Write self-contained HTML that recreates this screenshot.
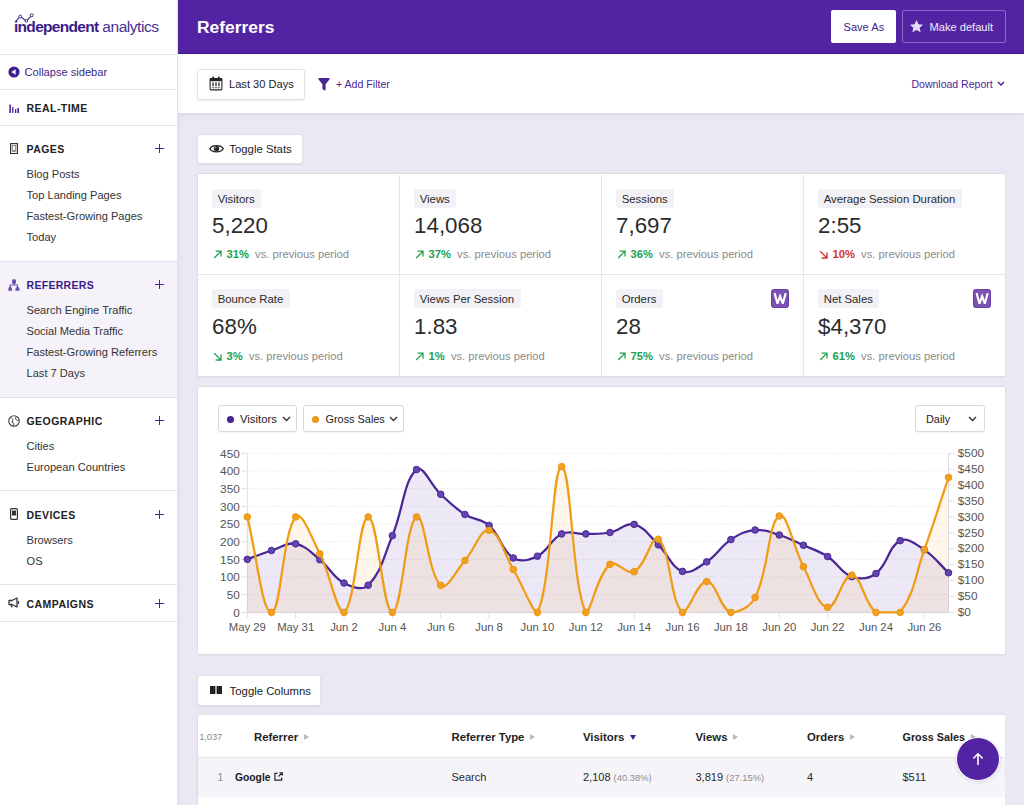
<!DOCTYPE html>
<html><head><meta charset="utf-8">
<style>
*{box-sizing:border-box;margin:0;padding:0}
html,body{width:1024px;height:805px;overflow:hidden;background:#ebe8f3;font-family:"Liberation Sans",sans-serif;color:#2c2c2c}
.abs{position:absolute}
#sidebar{position:absolute;left:0;top:0;width:178px;height:805px;background:#fff;border-right:1px solid #e3e1ea;box-shadow:1px 0 5px rgba(40,30,80,0.05);z-index:2}
.sec{position:absolute;left:0;width:177px;border-bottom:1px solid #e3e1ea}
.hdr{position:absolute;left:26.5px;font-size:10.5px;font-weight:bold;letter-spacing:0.45px;color:#222;line-height:12px}
.item{position:absolute;left:26.5px;font-size:11.1px;color:#333;line-height:13px;white-space:nowrap}
.plus{position:absolute;left:155px;width:9px;height:9px}
.plus:before,.plus:after{content:"";position:absolute;background:#4b2596}
.plus:before{left:0;top:3.9px;width:9px;height:1.2px}
.plus:after{left:3.9px;top:0;width:1.2px;height:9px}
#header{position:absolute;left:178px;top:0;width:846px;height:54px;background:#5224a4;border-bottom:1px solid #3e1a8e}
#filterbar{position:absolute;left:178px;top:54px;width:846px;height:59.5px;background:#fff;border-bottom:1px solid #e0dde6;box-shadow:0 1px 3px rgba(40,30,60,0.06)}
.btn{position:absolute;background:#fff;border:1px solid #e2e0e8;border-radius:3px;box-shadow:0 1px 2px rgba(0,0,0,0.08)}
.btxt{position:absolute;font-size:11.1px;color:#222;white-space:nowrap;line-height:13px}
.card{position:absolute;background:#fff;border:1px solid #dedce5;border-radius:2px;box-shadow:0 1px 1px rgba(0,0,0,0.03)}
.label{position:absolute;background:#f2f1f6;border-radius:3px;height:19.5px;font-size:11.35px;color:#2a2a2a;line-height:20px;padding:0 6.5px 0 6px;white-space:nowrap}
.big{position:absolute;font-size:22.3px;color:#2c2c2c;line-height:24px;white-space:nowrap}
.trend{position:absolute;font-size:11.2px;line-height:13px;white-space:nowrap;color:#8a8a8a}
.trend b{font-weight:bold}
.up b{color:#22a04b}
.down b{color:#d6312b}
.downgood b{color:#22a04b}
.arr{display:inline-block;width:9px;height:9px;vertical-align:-1px;margin-right:5px}
.woo{position:absolute;width:18.3px;height:18.3px;background:#7b52b2;border:1px solid #6a40a6;border-radius:2.5px;overflow:hidden}
.ax{font-size:11.3px;fill:#555;font-family:"Liberation Sans",sans-serif}
.th{position:absolute;font-size:11.35px;font-weight:bold;color:#222;line-height:13px;white-space:nowrap}
.td{position:absolute;font-size:11px;color:#2a2a2a;line-height:13px;white-space:nowrap}
.sortarr{display:inline-block;width:0;height:0;border-top:3.5px solid transparent;border-bottom:3.5px solid transparent;border-left:5px solid #b9b9c0;margin-left:6px;vertical-align:1px}
.pct{font-size:9.4px;color:#8d8d8d}
</style></head><body>
<div id="sidebar">
  <!-- logo -->
  <svg class="abs" style="left:0;top:0" width="40" height="28" viewBox="0 0 40 28">
    <polyline points="15.4,21.6 20.3,16.5 26.4,20.9 31.7,15.3" fill="none" stroke="#3f2a7e" stroke-width="1.1"/>
    <circle cx="20.3" cy="16.5" r="1.4" fill="#fff" stroke="#3f2a7e" stroke-width="1"/>
    <circle cx="26.4" cy="20.9" r="1.3" fill="#fff" stroke="#3f2a7e" stroke-width="1"/>
    <circle cx="31.7" cy="15.3" r="1.5" fill="#fff" stroke="#3f2a7e" stroke-width="1"/>
  </svg>
  <div class="abs" style="left:14px;top:18px;font-size:15.5px;line-height:18px;white-space:nowrap;letter-spacing:-0.7px"><span style="font-weight:bold;color:#3a1a88">independent</span><span style="color:#48308f;letter-spacing:-0.45px"> analytics</span></div>
  <div class="sec" style="top:0;height:55px"></div>
  <!-- collapse -->
  <div class="sec" style="top:55px;height:35px"></div>
  <svg class="abs" style="left:8px;top:66px" width="12" height="12" viewBox="0 0 12 12"><circle cx="6" cy="6" r="5.6" fill="#3f1f8e"/><path d="M3.3,6 L7.6,3.3 L7.6,8.7 Z" fill="#fff"/></svg>
  <div class="item" style="left:24.5px;top:65.5px;color:#3b1f85">Collapse sidebar</div>
  <!-- real-time -->
  <div class="sec" style="top:90px;height:36px"></div>
  <svg class="abs" style="left:9px;top:103.5px" width="10" height="9" viewBox="0 0 10 9"><rect x="0.3" y="0.5" width="1.6" height="8.5" fill="#4b2596"/><rect x="3.1" y="3" width="1.3" height="6" fill="#4b2596"/><rect x="6" y="5" width="1.3" height="4" fill="#4b2596"/><rect x="8.4" y="4" width="1.6" height="5" fill="#4b2596"/></svg>
  <div class="hdr" style="top:102px">REAL-TIME</div>
  <!-- pages -->
  <div class="sec" style="top:126px;height:136px"></div>
  <svg class="abs" style="left:10px;top:143.3px" width="8" height="11.2" viewBox="0 0 8 11.2"><rect x="0.6" y="0.6" width="6.8" height="10" fill="none" stroke="#333" stroke-width="1.2"/><rect x="2.3" y="2.6" width="3.4" height="4.8" fill="none" stroke="#777" stroke-width="0.9"/><rect x="2.3" y="8.2" width="3.4" height="0.9" fill="#777"/></svg>
  <div class="hdr" style="top:143px">PAGES</div>
  <div class="plus" style="top:144px"></div>
  <div class="item" style="top:167.7px">Blog Posts</div>
  <div class="item" style="top:188.9px">Top Landing Pages</div>
  <div class="item" style="top:210.1px">Fastest-Growing Pages</div>
  <div class="item" style="top:231.3px">Today</div>
  <!-- referrers -->
  <div class="sec" style="top:262px;height:136px;background:#f5f3f9"></div>
  <svg class="abs" style="left:8px;top:278px" width="12" height="13" viewBox="0 0 12 13"><rect x="4.1" y="1.2" width="3.9" height="4.8" rx="1.4" fill="#6a50b2"/><path d="M6,5.5 V7 M2.2,9.5 V7 H9.5 V9.5" fill="none" stroke="#6a50b2" stroke-width="1.1"/><path d="M0.2,12.7 Q0.2,9 2.15,8.8 Q4.1,9 4.1,12.7 Z" fill="#6a50b2"/><path d="M7.4,12.7 Q7.4,9 9.45,8.8 Q11.5,9 11.5,12.7 Z" fill="#6a50b2"/></svg>
  <div class="hdr" style="top:278.7px;color:#3a1d88;letter-spacing:0.3px">REFERRERS</div>
  <div class="plus" style="top:280px"></div>
  <div class="item" style="top:304px">Search Engine Traffic</div>
  <div class="item" style="top:325px">Social Media Traffic</div>
  <div class="item" style="top:346px">Fastest-Growing Referrers</div>
  <div class="item" style="top:367px">Last 7 Days</div>
  <!-- geographic -->
  <div class="sec" style="top:398px;height:93px"></div>
  <svg class="abs" style="left:8px;top:415px" width="12" height="12" viewBox="0 0 12 12"><circle cx="6" cy="6" r="5.3" fill="none" stroke="#444" stroke-width="1.1"/><path d="M3,2.5 L5,4.5 L4,7 L6,8.5 L5.5,11 M8,1.5 L7.5,4 L9.5,5.5 L11,5" fill="none" stroke="#444" stroke-width="1"/></svg>
  <div class="hdr" style="top:415px">GEOGRAPHIC</div>
  <div class="plus" style="top:416px"></div>
  <div class="item" style="top:440px">Cities</div>
  <div class="item" style="top:461px">European Countries</div>
  <!-- devices -->
  <div class="sec" style="top:491px;height:94px"></div>
  <svg class="abs" style="left:10px;top:508px" width="8" height="12" viewBox="0 0 8 12"><rect x="0.6" y="0.6" width="6.8" height="10.8" rx="1" fill="none" stroke="#333" stroke-width="1.2"/><rect x="2" y="2.5" width="4" height="5" fill="#333"/></svg>
  <div class="hdr" style="top:509px">DEVICES</div>
  <div class="plus" style="top:510px"></div>
  <div class="item" style="top:534px">Browsers</div>
  <div class="item" style="top:555px">OS</div>
  <!-- campaigns -->
  <div class="sec" style="top:585px;height:37px"></div>
  <svg class="abs" style="left:8px;top:597px" width="12" height="11" viewBox="0 0 12 11"><path d="M1,3.5 H4 L9,1 V10 L4,7.5 H1 Z M3,7.5 L4,10.5" fill="none" stroke="#333" stroke-width="1.3" stroke-linejoin="round"/><path d="M10.5,4 V7" stroke="#333" stroke-width="1.2"/></svg>
  <div class="hdr" style="top:598px">CAMPAIGNS</div>
  <div class="plus" style="top:599px"></div>
</div>

<div id="header">
  <div class="abs" style="left:19px;top:17.2px;font-size:17.4px;font-weight:bold;color:#fff;line-height:20px">Referrers</div>
  <div class="abs" style="left:653px;top:10px;width:65px;height:33px;background:#fff;border-radius:2px"></div>
  <div class="btxt" style="left:665.5px;top:20.6px;color:#3f2285">Save As</div>
  <div class="abs" style="left:724px;top:10px;width:104px;height:33px;border:1px solid #8a6cc6;border-radius:2px"></div>
  <svg class="abs" style="left:730.5px;top:18.6px" width="15" height="15" viewBox="0 0 24 24"><path d="M12,1.5 L15.2,8.2 L22.5,9 L17,14 L18.6,21.3 L12,17.6 L5.4,21.3 L7,14 L1.5,9 L8.8,8.2 Z" fill="#e4ddf2"/></svg>
  <div class="btxt" style="left:751.5px;top:20.6px;color:#f1edf8">Make default</div>
</div>

<div id="filterbar">
  <div class="btn" style="left:19px;top:14.5px;width:108px;height:31px"></div>
  <svg class="abs" style="left:31.2px;top:22px" width="14" height="15" viewBox="0 0 14 15"><rect x="1.1" y="2.6" width="11.8" height="11.3" rx="0.8" fill="none" stroke="#262626" stroke-width="1.1"/><rect x="1.1" y="2.6" width="11.8" height="2.6" fill="#262626"/><rect x="3.3" y="0.6" width="1.8" height="3.2" rx="0.6" fill="#262626"/><rect x="8.9" y="0.6" width="1.8" height="3.2" rx="0.6" fill="#262626"/><g fill="#262626"><rect x="3.4" y="6.4" width="1.3" height="3.6"/><rect x="6.35" y="6.4" width="1.3" height="3.6"/><rect x="9.3" y="6.4" width="1.3" height="3.6"/><rect x="3.4" y="11" width="1.3" height="1.3"/><rect x="6.35" y="11" width="1.3" height="1.3"/><rect x="9.3" y="11" width="1.3" height="1.3"/></g></svg>
  <div class="btxt" style="left:51px;top:23.5px">Last 30 Days</div>
  <svg class="abs" style="left:139.5px;top:23.5px" width="12" height="13" viewBox="0 0 12 13"><path d="M0.3,0.6 Q0.3,0 1,0 H11 Q11.7,0 11.7,0.6 Q11.7,1.2 11,2 L7.6,6.2 V11.6 Q7.6,12.8 6.6,12.3 L5,11.4 Q4.4,11 4.4,10.3 V6.2 L1,2 Q0.3,1.2 0.3,0.6 Z" fill="#4b2596"/></svg>
  <div class="btxt" style="left:158px;top:24px;color:#4b2596;font-size:10.6px">+ Add Filter</div>
  <div class="btxt" style="left:733.5px;top:24px;color:#4b2596;font-size:10.5px">Download Report</div>
  <svg class="abs" style="left:819px;top:27px" width="8" height="6" viewBox="0 0 8 6"><path d="M1,1 L4,4 L7,1" fill="none" stroke="#4b2596" stroke-width="1.5"/></svg>
</div>

<!-- toggle stats -->
<div class="btn" style="left:197px;top:133.5px;width:106px;height:30px"></div>
<svg class="abs" style="left:208.8px;top:144.3px" width="15" height="9.5" viewBox="0 0 15 9.5"><path d="M0.8,4.75 C3,0.6 12,0.6 14.2,4.75 C12,8.9 3,8.9 0.8,4.75 Z" fill="none" stroke="#222" stroke-width="1.4"/><circle cx="7.5" cy="4.6" r="2.7" fill="#222"/><circle cx="6.6" cy="3.6" r="0.9" fill="#999"/></svg>
<div class="btxt" style="left:229.3px;top:142.6px;font-size:11.35px">Toggle Stats</div>

<!-- stats grid -->
<div class="card" style="left:197px;top:173.3px;width:809px;height:203.7px"></div>
<div class="abs" style="left:399px;top:175px;width:1px;height:201px;background:#e6e4ec"></div>
<div class="abs" style="left:601px;top:175px;width:1px;height:201px;background:#e6e4ec"></div>
<div class="abs" style="left:803px;top:175px;width:1px;height:201px;background:#e6e4ec"></div>
<div class="abs" style="left:198px;top:274px;width:807px;height:1px;background:#e6e4ec"></div>
<div class="label" style="left:211.7px;top:188.5px">Visitors</div>
<div class="big" style="left:212.1px;top:213.6px">5,220</div>
<div class="trend up" style="left:212.5px;top:247.9px"><svg class="arr" viewBox="0 0 9 9"><path d="M1.2,8 L7.8,1.4 M2.6,1.2 H8 V6.6" fill="none" stroke="#22a04b" stroke-width="1.3"/></svg><b>31%</b>&nbsp; vs. previous period</div>
<div class="label" style="left:413.7px;top:188.5px">Views</div>
<div class="big" style="left:414.1px;top:213.6px">14,068</div>
<div class="trend up" style="left:414.5px;top:247.9px"><svg class="arr" viewBox="0 0 9 9"><path d="M1.2,8 L7.8,1.4 M2.6,1.2 H8 V6.6" fill="none" stroke="#22a04b" stroke-width="1.3"/></svg><b>37%</b>&nbsp; vs. previous period</div>
<div class="label" style="left:615.7px;top:188.5px">Sessions</div>
<div class="big" style="left:616.1px;top:213.6px">7,697</div>
<div class="trend up" style="left:616.5px;top:247.9px"><svg class="arr" viewBox="0 0 9 9"><path d="M1.2,8 L7.8,1.4 M2.6,1.2 H8 V6.6" fill="none" stroke="#22a04b" stroke-width="1.3"/></svg><b>36%</b>&nbsp; vs. previous period</div>
<div class="label" style="left:817.7px;top:188.5px">Average Session Duration</div>
<div class="big" style="left:818.1px;top:213.6px">2:55</div>
<div class="trend down" style="left:818.5px;top:247.9px"><svg class="arr" viewBox="0 0 9 9"><path d="M1.2,1.2 L7.8,7.8 M2.6,8 H8 V2.6" fill="none" stroke="#d6312b" stroke-width="1.3"/></svg><b>10%</b>&nbsp; vs. previous period</div>
<div class="label" style="left:211.7px;top:288.9px">Bounce Rate</div>
<div class="big" style="left:212.1px;top:315.2px">68%</div>
<div class="trend downgood" style="left:212.5px;top:349.5px"><svg class="arr" viewBox="0 0 9 9"><path d="M1.2,1.2 L7.8,7.8 M2.6,8 H8 V2.6" fill="none" stroke="#22a04b" stroke-width="1.3"/></svg><b>3%</b>&nbsp; vs. previous period</div>
<div class="label" style="left:413.7px;top:288.9px">Views Per Session</div>
<div class="big" style="left:414.1px;top:315.2px">1.83</div>
<div class="trend up" style="left:414.5px;top:349.5px"><svg class="arr" viewBox="0 0 9 9"><path d="M1.2,8 L7.8,1.4 M2.6,1.2 H8 V6.6" fill="none" stroke="#22a04b" stroke-width="1.3"/></svg><b>1%</b>&nbsp; vs. previous period</div>
<div class="label" style="left:615.7px;top:288.9px">Orders</div>
<div class="big" style="left:616.1px;top:315.2px">28</div>
<div class="trend up" style="left:616.5px;top:349.5px"><svg class="arr" viewBox="0 0 9 9"><path d="M1.2,8 L7.8,1.4 M2.6,1.2 H8 V6.6" fill="none" stroke="#22a04b" stroke-width="1.3"/></svg><b>75%</b>&nbsp; vs. previous period</div>
<div class="woo" style="left:770.9px;top:289.3px"><svg style="position:absolute;left:-1px;top:-1px" width="18.3" height="18.3" viewBox="0 0 18.3 18.3"><path d="M3.6,4.1 L6.5,14.6 L9.15,7.2 L11.8,14.6 L14.7,4.1" fill="none" stroke="#fff" stroke-width="2.1" stroke-linejoin="miter" stroke-miterlimit="3"/></svg></div>
<div class="label" style="left:817.7px;top:288.9px">Net Sales</div>
<div class="big" style="left:818.1px;top:315.2px">$4,370</div>
<div class="trend up" style="left:818.5px;top:349.5px"><svg class="arr" viewBox="0 0 9 9"><path d="M1.2,8 L7.8,1.4 M2.6,1.2 H8 V6.6" fill="none" stroke="#22a04b" stroke-width="1.3"/></svg><b>61%</b>&nbsp; vs. previous period</div>
<div class="woo" style="left:972.9px;top:289.3px"><svg style="position:absolute;left:-1px;top:-1px" width="18.3" height="18.3" viewBox="0 0 18.3 18.3"><path d="M3.6,4.1 L6.5,14.6 L9.15,7.2 L11.8,14.6 L14.7,4.1" fill="none" stroke="#fff" stroke-width="2.1" stroke-linejoin="miter" stroke-miterlimit="3"/></svg></div>

<!-- chart card -->
<div class="card" style="left:197px;top:386.2px;width:809px;height:269.3px"></div>
<div class="abs" style="left:217.5px;top:404.8px;width:79px;height:27.5px;background:#fff;border:1px solid #d9d7e0;border-radius:3px;box-shadow:0 1px 1px rgba(0,0,0,0.05)"></div>
<svg class="abs" style="left:226px;top:414.5px" width="9" height="9"><circle cx="4.5" cy="4.5" r="3.6" fill="#4b2596"/></svg>
<div class="btxt" style="left:240px;top:412.5px;font-size:11.3px">Visitors</div>
<svg class="abs" style="left:282px;top:416px" width="9" height="6" viewBox="0 0 9 6"><path d="M1,1 L4.5,4.5 L8,1" fill="none" stroke="#333" stroke-width="1.4"/></svg>
<div class="abs" style="left:303px;top:404.8px;width:101px;height:27.5px;background:#fff;border:1px solid #d9d7e0;border-radius:3px;box-shadow:0 1px 1px rgba(0,0,0,0.05)"></div>
<svg class="abs" style="left:311px;top:414.5px" width="9" height="9"><circle cx="4.5" cy="4.5" r="3.6" fill="#ec9b1f"/></svg>
<div class="btxt" style="left:325.5px;top:412.5px;font-size:10.9px">Gross Sales</div>
<svg class="abs" style="left:389px;top:416px" width="9" height="6" viewBox="0 0 9 6"><path d="M1,1 L4.5,4.5 L8,1" fill="none" stroke="#333" stroke-width="1.4"/></svg>
<div class="abs" style="left:915px;top:404.8px;width:70px;height:27.5px;background:#fff;border:1px solid #d9d7e0;border-radius:3px;box-shadow:0 1px 1px rgba(0,0,0,0.05)"></div>
<div class="btxt" style="left:926px;top:412.5px;font-size:10.9px">Daily</div>
<svg class="abs" style="left:968px;top:416px" width="9" height="6" viewBox="0 0 9 6"><path d="M1,1 L4.5,4.5 L8,1" fill="none" stroke="#333" stroke-width="1.4"/></svg>
<svg class="abs" style="left:0;top:0" width="1024" height="805" viewBox="0 0 1024 805">
<line x1="241.3" y1="612.40" x2="247.3" y2="612.40" stroke="#e0dee4" stroke-width="1"/>
<text class="ax" style="font-size:11.8px" x="239.8" y="616.60" text-anchor="end">0</text>
<line x1="247.3" y1="594.72" x2="948.52" y2="594.72" stroke="#e6e4ea" stroke-width="1" stroke-dasharray="1.2,2.3"/>
<line x1="241.3" y1="594.72" x2="247.3" y2="594.72" stroke="#e0dee4" stroke-width="1"/>
<text class="ax" style="font-size:11.8px" x="239.8" y="598.92" text-anchor="end">50</text>
<line x1="247.3" y1="577.04" x2="948.52" y2="577.04" stroke="#e6e4ea" stroke-width="1" stroke-dasharray="1.2,2.3"/>
<line x1="241.3" y1="577.04" x2="247.3" y2="577.04" stroke="#e0dee4" stroke-width="1"/>
<text class="ax" style="font-size:11.8px" x="239.8" y="581.24" text-anchor="end">100</text>
<line x1="247.3" y1="559.37" x2="948.52" y2="559.37" stroke="#e6e4ea" stroke-width="1" stroke-dasharray="1.2,2.3"/>
<line x1="241.3" y1="559.37" x2="247.3" y2="559.37" stroke="#e0dee4" stroke-width="1"/>
<text class="ax" style="font-size:11.8px" x="239.8" y="563.57" text-anchor="end">150</text>
<line x1="247.3" y1="541.69" x2="948.52" y2="541.69" stroke="#e6e4ea" stroke-width="1" stroke-dasharray="1.2,2.3"/>
<line x1="241.3" y1="541.69" x2="247.3" y2="541.69" stroke="#e0dee4" stroke-width="1"/>
<text class="ax" style="font-size:11.8px" x="239.8" y="545.89" text-anchor="end">200</text>
<line x1="247.3" y1="524.01" x2="948.52" y2="524.01" stroke="#e6e4ea" stroke-width="1" stroke-dasharray="1.2,2.3"/>
<line x1="241.3" y1="524.01" x2="247.3" y2="524.01" stroke="#e0dee4" stroke-width="1"/>
<text class="ax" style="font-size:11.8px" x="239.8" y="528.21" text-anchor="end">250</text>
<line x1="247.3" y1="506.33" x2="948.52" y2="506.33" stroke="#e6e4ea" stroke-width="1" stroke-dasharray="1.2,2.3"/>
<line x1="241.3" y1="506.33" x2="247.3" y2="506.33" stroke="#e0dee4" stroke-width="1"/>
<text class="ax" style="font-size:11.8px" x="239.8" y="510.53" text-anchor="end">300</text>
<line x1="247.3" y1="488.66" x2="948.52" y2="488.66" stroke="#e6e4ea" stroke-width="1" stroke-dasharray="1.2,2.3"/>
<line x1="241.3" y1="488.66" x2="247.3" y2="488.66" stroke="#e0dee4" stroke-width="1"/>
<text class="ax" style="font-size:11.8px" x="239.8" y="492.86" text-anchor="end">350</text>
<line x1="247.3" y1="470.98" x2="948.52" y2="470.98" stroke="#e6e4ea" stroke-width="1" stroke-dasharray="1.2,2.3"/>
<line x1="241.3" y1="470.98" x2="247.3" y2="470.98" stroke="#e0dee4" stroke-width="1"/>
<text class="ax" style="font-size:11.8px" x="239.8" y="475.18" text-anchor="end">400</text>
<line x1="247.3" y1="453.30" x2="948.52" y2="453.30" stroke="#e6e4ea" stroke-width="1" stroke-dasharray="1.2,2.3"/>
<line x1="241.3" y1="453.30" x2="247.3" y2="453.30" stroke="#e0dee4" stroke-width="1"/>
<text class="ax" style="font-size:11.8px" x="239.8" y="457.50" text-anchor="end">450</text>
<line x1="948.52" y1="612.40" x2="954.52" y2="612.40" stroke="#e0dee4" stroke-width="1"/>
<text class="ax" style="font-size:11.8px" x="957.8199999999999" y="616.10">$0</text>
<line x1="948.52" y1="596.49" x2="954.52" y2="596.49" stroke="#e0dee4" stroke-width="1"/>
<text class="ax" style="font-size:11.8px" x="957.8199999999999" y="600.19">$50</text>
<line x1="948.52" y1="580.58" x2="954.52" y2="580.58" stroke="#e0dee4" stroke-width="1"/>
<text class="ax" style="font-size:11.8px" x="957.8199999999999" y="584.28">$100</text>
<line x1="948.52" y1="564.67" x2="954.52" y2="564.67" stroke="#e0dee4" stroke-width="1"/>
<text class="ax" style="font-size:11.8px" x="957.8199999999999" y="568.37">$150</text>
<line x1="948.52" y1="548.76" x2="954.52" y2="548.76" stroke="#e0dee4" stroke-width="1"/>
<text class="ax" style="font-size:11.8px" x="957.8199999999999" y="552.46">$200</text>
<line x1="948.52" y1="532.85" x2="954.52" y2="532.85" stroke="#e0dee4" stroke-width="1"/>
<text class="ax" style="font-size:11.8px" x="957.8199999999999" y="536.55">$250</text>
<line x1="948.52" y1="516.94" x2="954.52" y2="516.94" stroke="#e0dee4" stroke-width="1"/>
<text class="ax" style="font-size:11.8px" x="957.8199999999999" y="520.64">$300</text>
<line x1="948.52" y1="501.03" x2="954.52" y2="501.03" stroke="#e0dee4" stroke-width="1"/>
<text class="ax" style="font-size:11.8px" x="957.8199999999999" y="504.73">$350</text>
<line x1="948.52" y1="485.12" x2="954.52" y2="485.12" stroke="#e0dee4" stroke-width="1"/>
<text class="ax" style="font-size:11.8px" x="957.8199999999999" y="488.82">$400</text>
<line x1="948.52" y1="469.21" x2="954.52" y2="469.21" stroke="#e0dee4" stroke-width="1"/>
<text class="ax" style="font-size:11.8px" x="957.8199999999999" y="472.91">$450</text>
<line x1="948.52" y1="453.30" x2="954.52" y2="453.30" stroke="#e0dee4" stroke-width="1"/>
<text class="ax" style="font-size:11.8px" x="957.8199999999999" y="457.00">$500</text>
<line x1="247.3" y1="453.3" x2="247.3" y2="612.4" stroke="#e0dee4"/>
<line x1="948.52" y1="453.3" x2="948.52" y2="612.4" stroke="#e0dee4"/>
<line x1="247.3" y1="612.4" x2="948.52" y2="612.4" stroke="#e0dee4"/>
<line x1="247.30" y1="612.4" x2="247.30" y2="618.4" stroke="#e0dee4"/>
<text class="ax" x="247.30" y="631.00" text-anchor="middle">May 29</text>
<line x1="295.66" y1="612.4" x2="295.66" y2="618.4" stroke="#e0dee4"/>
<text class="ax" x="295.66" y="631.00" text-anchor="middle">May 31</text>
<line x1="344.02" y1="612.4" x2="344.02" y2="618.4" stroke="#e0dee4"/>
<text class="ax" x="344.02" y="631.00" text-anchor="middle">Jun 2</text>
<line x1="392.38" y1="612.4" x2="392.38" y2="618.4" stroke="#e0dee4"/>
<text class="ax" x="392.38" y="631.00" text-anchor="middle">Jun 4</text>
<line x1="440.74" y1="612.4" x2="440.74" y2="618.4" stroke="#e0dee4"/>
<text class="ax" x="440.74" y="631.00" text-anchor="middle">Jun 6</text>
<line x1="489.10" y1="612.4" x2="489.10" y2="618.4" stroke="#e0dee4"/>
<text class="ax" x="489.10" y="631.00" text-anchor="middle">Jun 8</text>
<line x1="537.46" y1="612.4" x2="537.46" y2="618.4" stroke="#e0dee4"/>
<text class="ax" x="537.46" y="631.00" text-anchor="middle">Jun 10</text>
<line x1="585.82" y1="612.4" x2="585.82" y2="618.4" stroke="#e0dee4"/>
<text class="ax" x="585.82" y="631.00" text-anchor="middle">Jun 12</text>
<line x1="634.18" y1="612.4" x2="634.18" y2="618.4" stroke="#e0dee4"/>
<text class="ax" x="634.18" y="631.00" text-anchor="middle">Jun 14</text>
<line x1="682.54" y1="612.4" x2="682.54" y2="618.4" stroke="#e0dee4"/>
<text class="ax" x="682.54" y="631.00" text-anchor="middle">Jun 16</text>
<line x1="730.90" y1="612.4" x2="730.90" y2="618.4" stroke="#e0dee4"/>
<text class="ax" x="730.90" y="631.00" text-anchor="middle">Jun 18</text>
<line x1="779.26" y1="612.4" x2="779.26" y2="618.4" stroke="#e0dee4"/>
<text class="ax" x="779.26" y="631.00" text-anchor="middle">Jun 20</text>
<line x1="827.62" y1="612.4" x2="827.62" y2="618.4" stroke="#e0dee4"/>
<text class="ax" x="827.62" y="631.00" text-anchor="middle">Jun 22</text>
<line x1="875.98" y1="612.4" x2="875.98" y2="618.4" stroke="#e0dee4"/>
<text class="ax" x="875.98" y="631.00" text-anchor="middle">Jun 24</text>
<line x1="924.34" y1="612.4" x2="924.34" y2="618.4" stroke="#e0dee4"/>
<text class="ax" x="924.34" y="631.00" text-anchor="middle">Jun 26</text>
<path d="M247.30,559.37 C256.97,555.83 261.68,553.68 271.48,550.53 C281.03,547.46 286.68,542.10 295.66,543.81 C306.02,545.78 310.89,552.46 319.84,559.72 C330.23,568.15 332.79,577.14 344.02,583.05 C352.13,587.33 362.28,590.97 368.20,585.18 C381.63,572.02 383.89,555.98 392.38,535.68 C403.23,509.73 403.59,480.66 416.56,469.56 C422.93,464.11 430.61,484.91 440.74,494.31 C449.95,502.87 454.43,507.71 464.92,514.47 C473.77,520.16 481.44,518.54 489.10,525.43 C500.79,535.94 501.18,550.25 513.28,557.95 C520.52,562.56 529.25,560.27 537.46,556.18 C548.59,550.65 550.49,539.04 561.64,533.91 C569.84,530.13 576.16,534.19 585.82,533.91 C595.50,533.63 600.58,534.36 610.00,532.50 C619.92,530.54 625.56,522.16 634.18,524.36 C644.90,527.11 649.29,536.05 658.36,544.87 C668.63,554.86 671.32,567.45 682.54,571.39 C690.67,574.24 698.18,567.46 706.72,561.84 C717.52,554.73 720.10,546.68 730.90,539.57 C739.44,533.95 745.16,530.96 755.08,530.02 C764.50,529.13 769.89,532.03 779.26,534.97 C789.23,538.11 793.85,540.95 803.44,545.22 C813.19,549.57 818.74,550.76 827.62,556.54 C838.09,563.35 840.90,572.87 851.80,576.69 C860.24,579.65 868.74,578.90 875.98,573.51 C888.09,564.48 888.32,546.43 900.16,540.63 C907.66,536.95 915.89,544.20 924.34,549.82 C935.24,557.07 938.85,563.61 948.52,572.80 L948.52,612.4 L247.30,612.4 Z" fill="rgba(82,35,160,0.105)"/>
<path d="M247.30,516.94 C256.97,555.12 261.81,612.40 271.48,612.40 C281.15,612.40 282.30,533.11 295.66,516.94 C301.65,509.69 311.90,538.17 319.84,553.85 C331.24,576.36 336.45,612.40 344.02,612.40 C355.79,603.42 358.53,516.94 368.20,516.94 C377.87,516.94 382.71,612.40 392.38,612.40 C402.05,612.40 405.42,523.17 416.56,516.94 C424.77,512.35 427.65,573.55 440.74,585.35 C446.99,590.99 455.78,570.93 464.92,560.53 C475.13,548.91 480.26,528.68 489.10,530.30 C499.60,532.24 503.94,553.59 513.28,569.44 C523.29,586.43 532.62,612.40 537.46,612.40 C551.96,581.57 551.97,466.66 561.64,466.66 C571.31,466.66 571.64,583.76 585.82,612.40 C590.98,612.40 596.84,575.44 610.00,564.35 C616.18,559.15 626.75,575.53 634.18,571.67 C646.09,565.48 651.70,533.60 658.36,539.21 C671.04,549.90 669.72,601.18 682.54,612.40 C689.06,612.40 697.05,581.53 706.72,581.53 C716.39,581.53 719.69,608.71 730.90,612.40 C739.03,612.40 750.23,607.11 755.08,597.44 C769.57,568.55 767.61,523.42 779.26,515.99 C786.95,511.08 792.95,546.78 803.44,566.58 C812.30,583.31 817.16,605.45 827.62,607.31 C836.50,608.89 842.61,574.20 851.80,575.17 C861.95,576.24 863.46,602.76 875.98,612.40 C882.80,612.40 895.04,612.40 900.16,612.40 C914.38,593.96 915.27,575.01 924.34,549.71 C934.62,521.04 938.85,506.38 948.52,477.48 L948.52,612.4 L247.30,612.4 Z" fill="rgba(240,156,22,0.085)"/>
<path d="M247.30,559.37 C256.97,555.83 261.68,553.68 271.48,550.53 C281.03,547.46 286.68,542.10 295.66,543.81 C306.02,545.78 310.89,552.46 319.84,559.72 C330.23,568.15 332.79,577.14 344.02,583.05 C352.13,587.33 362.28,590.97 368.20,585.18 C381.63,572.02 383.89,555.98 392.38,535.68 C403.23,509.73 403.59,480.66 416.56,469.56 C422.93,464.11 430.61,484.91 440.74,494.31 C449.95,502.87 454.43,507.71 464.92,514.47 C473.77,520.16 481.44,518.54 489.10,525.43 C500.79,535.94 501.18,550.25 513.28,557.95 C520.52,562.56 529.25,560.27 537.46,556.18 C548.59,550.65 550.49,539.04 561.64,533.91 C569.84,530.13 576.16,534.19 585.82,533.91 C595.50,533.63 600.58,534.36 610.00,532.50 C619.92,530.54 625.56,522.16 634.18,524.36 C644.90,527.11 649.29,536.05 658.36,544.87 C668.63,554.86 671.32,567.45 682.54,571.39 C690.67,574.24 698.18,567.46 706.72,561.84 C717.52,554.73 720.10,546.68 730.90,539.57 C739.44,533.95 745.16,530.96 755.08,530.02 C764.50,529.13 769.89,532.03 779.26,534.97 C789.23,538.11 793.85,540.95 803.44,545.22 C813.19,549.57 818.74,550.76 827.62,556.54 C838.09,563.35 840.90,572.87 851.80,576.69 C860.24,579.65 868.74,578.90 875.98,573.51 C888.09,564.48 888.32,546.43 900.16,540.63 C907.66,536.95 915.89,544.20 924.34,549.82 C935.24,557.07 938.85,563.61 948.52,572.80" fill="none" stroke="#4a2796" stroke-width="2.25"/>
<circle cx="247.30" cy="559.37" r="3.3" fill="#6344b0" stroke="#4a2796" stroke-width="1"/>
<circle cx="271.48" cy="550.53" r="3.3" fill="#6344b0" stroke="#4a2796" stroke-width="1"/>
<circle cx="295.66" cy="543.81" r="3.3" fill="#6344b0" stroke="#4a2796" stroke-width="1"/>
<circle cx="319.84" cy="559.72" r="3.3" fill="#6344b0" stroke="#4a2796" stroke-width="1"/>
<circle cx="344.02" cy="583.05" r="3.3" fill="#6344b0" stroke="#4a2796" stroke-width="1"/>
<circle cx="368.20" cy="585.18" r="3.3" fill="#6344b0" stroke="#4a2796" stroke-width="1"/>
<circle cx="392.38" cy="535.68" r="3.3" fill="#6344b0" stroke="#4a2796" stroke-width="1"/>
<circle cx="416.56" cy="469.56" r="3.3" fill="#6344b0" stroke="#4a2796" stroke-width="1"/>
<circle cx="440.74" cy="494.31" r="3.3" fill="#6344b0" stroke="#4a2796" stroke-width="1"/>
<circle cx="464.92" cy="514.47" r="3.3" fill="#6344b0" stroke="#4a2796" stroke-width="1"/>
<circle cx="489.10" cy="525.43" r="3.3" fill="#6344b0" stroke="#4a2796" stroke-width="1"/>
<circle cx="513.28" cy="557.95" r="3.3" fill="#6344b0" stroke="#4a2796" stroke-width="1"/>
<circle cx="537.46" cy="556.18" r="3.3" fill="#6344b0" stroke="#4a2796" stroke-width="1"/>
<circle cx="561.64" cy="533.91" r="3.3" fill="#6344b0" stroke="#4a2796" stroke-width="1"/>
<circle cx="585.82" cy="533.91" r="3.3" fill="#6344b0" stroke="#4a2796" stroke-width="1"/>
<circle cx="610.00" cy="532.50" r="3.3" fill="#6344b0" stroke="#4a2796" stroke-width="1"/>
<circle cx="634.18" cy="524.36" r="3.3" fill="#6344b0" stroke="#4a2796" stroke-width="1"/>
<circle cx="658.36" cy="544.87" r="3.3" fill="#6344b0" stroke="#4a2796" stroke-width="1"/>
<circle cx="682.54" cy="571.39" r="3.3" fill="#6344b0" stroke="#4a2796" stroke-width="1"/>
<circle cx="706.72" cy="561.84" r="3.3" fill="#6344b0" stroke="#4a2796" stroke-width="1"/>
<circle cx="730.90" cy="539.57" r="3.3" fill="#6344b0" stroke="#4a2796" stroke-width="1"/>
<circle cx="755.08" cy="530.02" r="3.3" fill="#6344b0" stroke="#4a2796" stroke-width="1"/>
<circle cx="779.26" cy="534.97" r="3.3" fill="#6344b0" stroke="#4a2796" stroke-width="1"/>
<circle cx="803.44" cy="545.22" r="3.3" fill="#6344b0" stroke="#4a2796" stroke-width="1"/>
<circle cx="827.62" cy="556.54" r="3.3" fill="#6344b0" stroke="#4a2796" stroke-width="1"/>
<circle cx="851.80" cy="576.69" r="3.3" fill="#6344b0" stroke="#4a2796" stroke-width="1"/>
<circle cx="875.98" cy="573.51" r="3.3" fill="#6344b0" stroke="#4a2796" stroke-width="1"/>
<circle cx="900.16" cy="540.63" r="3.3" fill="#6344b0" stroke="#4a2796" stroke-width="1"/>
<circle cx="924.34" cy="549.82" r="3.3" fill="#6344b0" stroke="#4a2796" stroke-width="1"/>
<circle cx="948.52" cy="572.80" r="3.3" fill="#6344b0" stroke="#4a2796" stroke-width="1"/>
<path d="M247.30,516.94 C256.97,555.12 261.81,612.40 271.48,612.40 C281.15,612.40 282.30,533.11 295.66,516.94 C301.65,509.69 311.90,538.17 319.84,553.85 C331.24,576.36 336.45,612.40 344.02,612.40 C355.79,603.42 358.53,516.94 368.20,516.94 C377.87,516.94 382.71,612.40 392.38,612.40 C402.05,612.40 405.42,523.17 416.56,516.94 C424.77,512.35 427.65,573.55 440.74,585.35 C446.99,590.99 455.78,570.93 464.92,560.53 C475.13,548.91 480.26,528.68 489.10,530.30 C499.60,532.24 503.94,553.59 513.28,569.44 C523.29,586.43 532.62,612.40 537.46,612.40 C551.96,581.57 551.97,466.66 561.64,466.66 C571.31,466.66 571.64,583.76 585.82,612.40 C590.98,612.40 596.84,575.44 610.00,564.35 C616.18,559.15 626.75,575.53 634.18,571.67 C646.09,565.48 651.70,533.60 658.36,539.21 C671.04,549.90 669.72,601.18 682.54,612.40 C689.06,612.40 697.05,581.53 706.72,581.53 C716.39,581.53 719.69,608.71 730.90,612.40 C739.03,612.40 750.23,607.11 755.08,597.44 C769.57,568.55 767.61,523.42 779.26,515.99 C786.95,511.08 792.95,546.78 803.44,566.58 C812.30,583.31 817.16,605.45 827.62,607.31 C836.50,608.89 842.61,574.20 851.80,575.17 C861.95,576.24 863.46,602.76 875.98,612.40 C882.80,612.40 895.04,612.40 900.16,612.40 C914.38,593.96 915.27,575.01 924.34,549.71 C934.62,521.04 938.85,506.38 948.52,477.48" fill="none" stroke="#f09c16" stroke-width="2.25"/>
<circle cx="247.30" cy="516.94" r="3.3" fill="#f2a020" stroke="#ea9512" stroke-width="1"/>
<circle cx="271.48" cy="612.40" r="3.3" fill="#f2a020" stroke="#ea9512" stroke-width="1"/>
<circle cx="295.66" cy="516.94" r="3.3" fill="#f2a020" stroke="#ea9512" stroke-width="1"/>
<circle cx="319.84" cy="553.85" r="3.3" fill="#f2a020" stroke="#ea9512" stroke-width="1"/>
<circle cx="344.02" cy="612.40" r="3.3" fill="#f2a020" stroke="#ea9512" stroke-width="1"/>
<circle cx="368.20" cy="516.94" r="3.3" fill="#f2a020" stroke="#ea9512" stroke-width="1"/>
<circle cx="392.38" cy="612.40" r="3.3" fill="#f2a020" stroke="#ea9512" stroke-width="1"/>
<circle cx="416.56" cy="516.94" r="3.3" fill="#f2a020" stroke="#ea9512" stroke-width="1"/>
<circle cx="440.74" cy="585.35" r="3.3" fill="#f2a020" stroke="#ea9512" stroke-width="1"/>
<circle cx="464.92" cy="560.53" r="3.3" fill="#f2a020" stroke="#ea9512" stroke-width="1"/>
<circle cx="489.10" cy="530.30" r="3.3" fill="#f2a020" stroke="#ea9512" stroke-width="1"/>
<circle cx="513.28" cy="569.44" r="3.3" fill="#f2a020" stroke="#ea9512" stroke-width="1"/>
<circle cx="537.46" cy="612.40" r="3.3" fill="#f2a020" stroke="#ea9512" stroke-width="1"/>
<circle cx="561.64" cy="466.66" r="3.3" fill="#f2a020" stroke="#ea9512" stroke-width="1"/>
<circle cx="585.82" cy="612.40" r="3.3" fill="#f2a020" stroke="#ea9512" stroke-width="1"/>
<circle cx="610.00" cy="564.35" r="3.3" fill="#f2a020" stroke="#ea9512" stroke-width="1"/>
<circle cx="634.18" cy="571.67" r="3.3" fill="#f2a020" stroke="#ea9512" stroke-width="1"/>
<circle cx="658.36" cy="539.21" r="3.3" fill="#f2a020" stroke="#ea9512" stroke-width="1"/>
<circle cx="682.54" cy="612.40" r="3.3" fill="#f2a020" stroke="#ea9512" stroke-width="1"/>
<circle cx="706.72" cy="581.53" r="3.3" fill="#f2a020" stroke="#ea9512" stroke-width="1"/>
<circle cx="730.90" cy="612.40" r="3.3" fill="#f2a020" stroke="#ea9512" stroke-width="1"/>
<circle cx="755.08" cy="597.44" r="3.3" fill="#f2a020" stroke="#ea9512" stroke-width="1"/>
<circle cx="779.26" cy="515.99" r="3.3" fill="#f2a020" stroke="#ea9512" stroke-width="1"/>
<circle cx="803.44" cy="566.58" r="3.3" fill="#f2a020" stroke="#ea9512" stroke-width="1"/>
<circle cx="827.62" cy="607.31" r="3.3" fill="#f2a020" stroke="#ea9512" stroke-width="1"/>
<circle cx="851.80" cy="575.17" r="3.3" fill="#f2a020" stroke="#ea9512" stroke-width="1"/>
<circle cx="875.98" cy="612.40" r="3.3" fill="#f2a020" stroke="#ea9512" stroke-width="1"/>
<circle cx="900.16" cy="612.40" r="3.3" fill="#f2a020" stroke="#ea9512" stroke-width="1"/>
<circle cx="924.34" cy="549.71" r="3.3" fill="#f2a020" stroke="#ea9512" stroke-width="1"/>
<circle cx="948.52" cy="477.48" r="3.3" fill="#f2a020" stroke="#ea9512" stroke-width="1"/>
</svg>

<!-- toggle columns -->
<div class="btn" style="left:197px;top:674.8px;width:124px;height:31px"></div>
<svg class="abs" style="left:210.3px;top:686.3px" width="12" height="8" viewBox="0 0 12 8"><rect x="0" y="0" width="5.4" height="8" fill="#222"/><rect x="6.6" y="0" width="5.4" height="8" fill="#222"/></svg>
<div class="btxt" style="left:229.6px;top:684.6px;font-size:11.35px">Toggle Columns</div>

<!-- table -->
<div class="abs" style="left:197px;top:714.3px;width:808px;height:100px;background:#fff;border-left:1px solid #dcdae3;border-top:1px solid #e3e1e9;box-shadow:0 -1px 2px rgba(0,0,0,0.03)"></div>
<div class="abs" style="left:198px;top:756.5px;width:807px;height:40px;background:#f5f4f9;border-top:1px solid #e6e4ec"></div>
<div class="td" style="left:199.3px;top:730.3px;font-size:9.4px;color:#8a8a8a;letter-spacing:-0.15px">1,037</div>
<div class="th" style="left:254px;top:730.5px">Referrer<span class="sortarr"></span></div>
<div class="th" style="left:451.5px;top:730.5px">Referrer Type<span class="sortarr"></span></div>
<div class="th" style="left:583px;top:730.5px">Visitors<span style="display:inline-block;width:0;height:0;border-left:3.5px solid transparent;border-right:3.5px solid transparent;border-top:5px solid #3f2290;margin-left:5.5px;vertical-align:1px"></span></div>
<div class="th" style="left:695.5px;top:730.5px">Views<span class="sortarr"></span></div>
<div class="th" style="left:807px;top:730.5px">Orders<span class="sortarr"></span></div>
<div class="th" style="left:902.5px;top:730.5px;font-size:10.8px">Gross Sales<span class="sortarr"></span></div>
<div class="td" style="left:217.5px;top:770.5px;font-size:10.3px;color:#8a8a8a">1</div>
<div class="td" style="left:235px;top:771px;font-weight:bold;font-size:10.3px;color:#1a1a1a">Google</div>
<svg class="abs" style="left:274.2px;top:772px" width="9" height="9" viewBox="0 0 10 10"><path d="M4,1.5 H1 V9 H8.5 V6" fill="none" stroke="#222" stroke-width="1.3"/><path d="M5,5 L9,1 M6,0.8 H9.2 V4" fill="none" stroke="#222" stroke-width="1.3"/></svg>
<div class="td" style="left:451.5px;top:771px">Search</div>
<div class="td" style="left:583px;top:771px">2,108 <span class="pct">(40.38%)</span></div>
<div class="td" style="left:695.5px;top:771px">3,819 <span class="pct">(27.15%)</span></div>
<div class="td" style="left:807px;top:771px">4</div>
<div class="td" style="left:902.5px;top:771px">$511</div>

<!-- scroll top -->
<div class="abs" style="left:956px;top:736.7px;width:44px;height:44px;border-radius:50%;background:#5224a4;border:1.8px solid #fff;box-shadow:0 1px 4px rgba(0,0,0,0.12)"></div>
<svg class="abs" style="left:971px;top:751.5px" width="14" height="14" viewBox="0 0 14 14"><path d="M7,12.5 V2 M2.8,6 L7,1.8 L11.2,6" fill="none" stroke="#fff" stroke-width="1.6" stroke-linecap="round"/></svg>
</body></html>
